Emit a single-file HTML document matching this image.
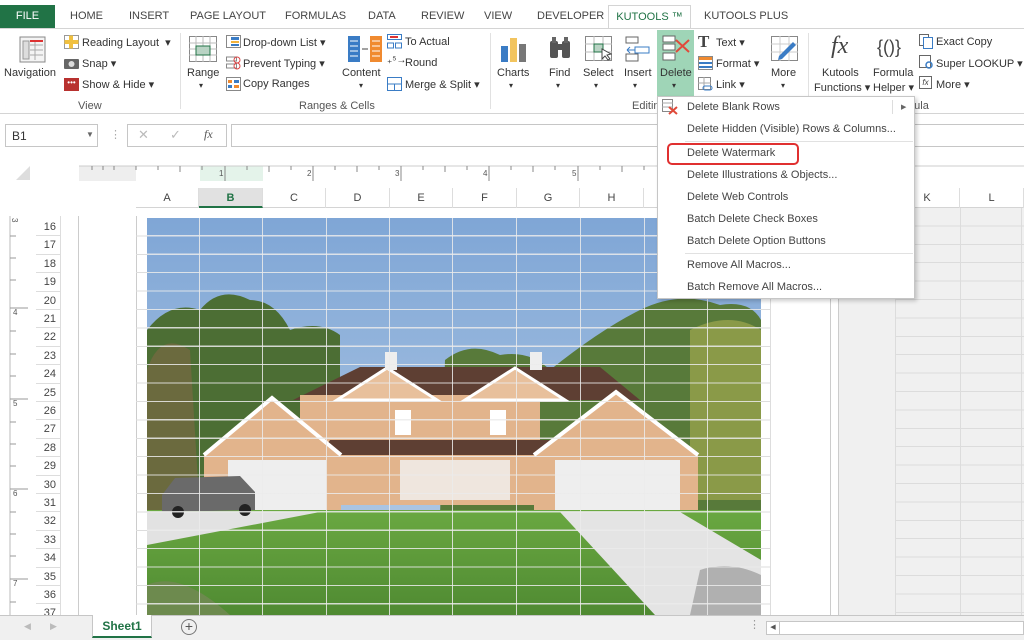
<!DOCTYPE html>
<html><head><meta charset="utf-8">
<style>
*{margin:0;padding:0;box-sizing:border-box}
body{width:1024px;height:640px;overflow:hidden;background:#fff;font-family:"Liberation Sans",sans-serif;color:#444;position:relative;font-size:11px}
.a{position:absolute;white-space:nowrap}
.tab{position:absolute;top:10px;font-size:11px;color:#444}
.sm{position:absolute;font-size:11px;color:#333}
.ic{position:absolute;width:14px;height:13px}
.lbl{position:absolute;font-size:11px;color:#333;text-align:center}
.gl{position:absolute;top:100px;font-size:11px;color:#555}
.rn{position:absolute;left:36px;width:24px;text-align:right;font-size:11px;color:#444;padding-right:4px;border-bottom:1px solid #ddd;height:18.4px;line-height:18px}
.ch{position:absolute;top:188px;height:20px;line-height:20px;text-align:center;font-size:11px;color:#444;border-right:1px solid #ddd}
.mi{position:absolute;left:687px;font-size:11px;color:#444}
</style></head><body>
<!-- tabs -->
<div class="a" style="left:0;top:5px;width:55px;height:23px;background:#217346;color:#fff;text-align:center;line-height:23px;font-size:11px">FILE</div>
<div class="tab" style="left:70px">HOME</div>
<div class="tab" style="left:129px">INSERT</div>
<div class="tab" style="left:190px">PAGE LAYOUT</div>
<div class="tab" style="left:285px">FORMULAS</div>
<div class="tab" style="left:368px">DATA</div>
<div class="tab" style="left:421px">REVIEW</div>
<div class="tab" style="left:484px">VIEW</div>
<div class="tab" style="left:537px">DEVELOPER</div>
<div class="a" style="left:608px;top:5px;width:83px;height:24px;border:1px solid #d4d4d4;border-bottom:none;background:#fff;color:#217346;text-align:center;line-height:23px;font-size:11px">KUTOOLS ™</div>
<div class="tab" style="left:704px">KUTOOLS PLUS</div>
<div class="a" style="left:0;top:28px;width:1024px;height:1px;background:#d4d4d4"></div>
<div class="a" style="left:691px;top:28px;width:333px;height:1px;background:#d4d4d4"></div>
<div class="a" style="left:0;top:113px;width:1024px;height:1px;background:#d4d4d4"></div>
<!-- separators -->
<div class="a" style="left:180px;top:33px;width:1px;height:76px;background:#e1e1e1"></div>
<div class="a" style="left:490px;top:33px;width:1px;height:76px;background:#e1e1e1"></div>
<div class="a" style="left:808px;top:33px;width:1px;height:76px;background:#e1e1e1"></div>
<!-- View group -->
<svg class="a" style="left:19px;top:36px" width="27" height="27"><rect x="1" y="1" width="25" height="25" fill="#f4f4f4" stroke="#888"/><rect x="4" y="5" width="6" height="18" fill="#ddd" stroke="#999"/><g stroke="#aaa"><line x1="11" y1="9" x2="24" y2="9"/><line x1="11" y1="14" x2="24" y2="14"/><line x1="11" y1="19" x2="24" y2="19"/><line x1="16" y1="4" x2="16" y2="24"/></g><line x1="11" y1="5" x2="24" y2="5" stroke="#d33" stroke-width="2"/></svg>
<div class="lbl" style="left:4px;top:67px">Navigation</div>
<svg class="a" style="left:64px;top:35px" width="15" height="14"><rect x="0.5" y="0.5" width="14" height="13" fill="#fff" stroke="#999"/><rect x="5" y="0.5" width="4" height="13" fill="#f0c040"/><rect x="0.5" y="5" width="14" height="4" fill="#f0c040"/></svg>
<div class="sm" style="left:82px;top:36px">Reading Layout &nbsp;▾</div>
<svg class="a" style="left:64px;top:57px" width="15" height="12"><rect x="0" y="2" width="15" height="10" rx="1" fill="#666"/><circle cx="7.5" cy="7" r="3" fill="#ddd"/></svg>
<div class="sm" style="left:82px;top:57px">Snap ▾</div>
<div class="a" style="left:64px;top:78px;width:15px;height:13px;background:#b8312f;color:#fff;font-size:8px;line-height:9px;text-align:center">•••</div>
<div class="sm" style="left:82px;top:78px">Show &amp; Hide ▾</div>
<div class="gl" style="left:78px">View</div>
<!-- Ranges & Cells -->
<svg class="a" style="left:189px;top:36px" width="28" height="26"><rect x="0.5" y="0.5" width="27" height="25" fill="#fff" stroke="#888"/><g stroke="#bbb"><line x1="7" y1="0" x2="7" y2="26"/><line x1="14" y1="0" x2="14" y2="26"/><line x1="21" y1="0" x2="21" y2="26"/><line x1="0" y1="7" x2="28" y2="7"/><line x1="0" y1="13" x2="28" y2="13"/><line x1="0" y1="19" x2="28" y2="19"/></g><rect x="7" y="10" width="14" height="9" fill="#b9d3c4" stroke="#217346"/></svg>
<div class="lbl" style="left:187px;top:67px">Range</div>
<div class="lbl" style="left:199px;top:81px;font-size:8px">▾</div>
<svg class="a" style="left:226px;top:35px" width="15" height="13"><rect x="0.5" y="0.5" width="14" height="12" fill="#fff" stroke="#888"/><rect x="5" y="2" width="8" height="3" fill="#3a7cc5"/><rect x="5" y="6" width="8" height="2" fill="#f2b33d"/><rect x="5" y="9" width="8" height="2" fill="#3a7cc5"/></svg>
<div class="sm" style="left:243px;top:36px">Drop-down List ▾</div>
<svg class="a" style="left:226px;top:56px" width="15" height="14"><rect x="0.5" y="1" width="10" height="4" fill="#fff" stroke="#888"/><rect x="0.5" y="8" width="10" height="4" fill="#fff" stroke="#888"/><circle cx="11" cy="4" r="3" fill="none" stroke="#d44"/><circle cx="11" cy="10" r="3" fill="none" stroke="#d44"/></svg>
<div class="sm" style="left:243px;top:57px">Prevent Typing ▾</div>
<svg class="a" style="left:226px;top:77px" width="15" height="14"><rect x="0.5" y="0.5" width="14" height="13" fill="#fff" stroke="#888"/><rect x="2" y="3" width="4" height="3" fill="#f08a30"/><rect x="2" y="8" width="4" height="3" fill="#3a7cc5"/><rect x="8" y="3" width="5" height="3" fill="#3a7cc5"/><rect x="8" y="8" width="5" height="3" fill="#f08a30"/></svg>
<div class="sm" style="left:243px;top:78px">Copy Ranges</div>
<svg class="a" style="left:348px;top:36px" width="34" height="26"><rect x="0" y="0" width="12" height="26" fill="#3a7cc5"/><rect x="22" y="0" width="12" height="26" fill="#f08a30"/><g stroke="#fff"><line x1="2" y1="5" x2="10" y2="5"/><line x1="2" y1="10" x2="10" y2="10"/><line x1="2" y1="15" x2="10" y2="15"/><line x1="2" y1="20" x2="10" y2="20"/><line x1="24" y1="5" x2="32" y2="5"/><line x1="24" y1="10" x2="32" y2="10"/><line x1="24" y1="15" x2="32" y2="15"/><line x1="24" y1="20" x2="32" y2="20"/></g><path d="M14 13h6" stroke="#444"/></svg>
<div class="lbl" style="left:342px;top:67px">Content</div>
<div class="lbl" style="left:359px;top:81px;font-size:8px">▾</div>
<svg class="a" style="left:387px;top:34px" width="15" height="15"><rect x="0.5" y="0.5" width="14" height="5" fill="#fff" stroke="#3a7cc5"/><rect x="3" y="2" width="8" height="2" fill="#d33"/><rect x="0.5" y="9" width="6" height="5" fill="#fff" stroke="#3a7cc5"/><rect x="8.5" y="9" width="6" height="5" fill="#fff" stroke="#3a7cc5"/></svg>
<div class="sm" style="left:405px;top:36px">To Actual</div>
<div class="sm" style="left:387px;top:55px;font-size:10px">₊⁵→</div>
<div class="sm" style="left:405px;top:57px">Round</div>
<svg class="a" style="left:387px;top:77px" width="15" height="14"><rect x="0.5" y="0.5" width="14" height="13" fill="#fff" stroke="#3a7cc5"/><line x1="0" y1="7" x2="15" y2="7" stroke="#3a7cc5"/><line x1="7.5" y1="7" x2="7.5" y2="14" stroke="#3a7cc5"/></svg>
<div class="sm" style="left:405px;top:78px">Merge &amp; Split ▾</div>
<div class="gl" style="left:299px">Ranges &amp; Cells</div>
<!-- Editing -->
<svg class="a" style="left:500px;top:36px" width="26" height="26"><rect x="1" y="10" width="7" height="16" fill="#3a7cc5"/><rect x="10" y="2" width="7" height="24" fill="#f2c45e"/><rect x="19" y="8" width="7" height="18" fill="#777"/></svg>
<div class="lbl" style="left:497px;top:67px">Charts</div>
<div class="lbl" style="left:509px;top:81px;font-size:8px">▾</div>
<svg class="a" style="left:548px;top:36px" width="24" height="24"><rect x="2" y="5" width="8" height="17" rx="2" fill="#555"/><rect x="14" y="5" width="8" height="17" rx="2" fill="#555"/><rect x="4" y="1" width="4" height="6" fill="#666"/><rect x="16" y="1" width="4" height="6" fill="#666"/><rect x="9" y="8" width="6" height="6" fill="#555"/></svg>
<div class="lbl" style="left:549px;top:67px">Find</div>
<div class="lbl" style="left:556px;top:81px;font-size:8px">▾</div>
<svg class="a" style="left:585px;top:36px" width="27" height="25"><rect x="0.5" y="0.5" width="26" height="24" fill="#fff" stroke="#888"/><g stroke="#bbb"><line x1="9" y1="0" x2="9" y2="25"/><line x1="18" y1="0" x2="18" y2="25"/><line x1="0" y1="8" x2="27" y2="8"/><line x1="0" y1="16" x2="27" y2="16"/></g><rect x="9" y="8" width="9" height="8" fill="#b9d3c4" stroke="#217346"/><path d="M17 13l0 10 3-3 3 4 2-1-3-4 4-1z" fill="#fff" stroke="#444"/></svg>
<div class="lbl" style="left:583px;top:67px">Select</div>
<div class="lbl" style="left:594px;top:81px;font-size:8px">▾</div>
<svg class="a" style="left:625px;top:36px" width="26" height="26"><rect x="1" y="1" width="12" height="6" fill="#fff" stroke="#666"/><rect x="10" y="11" width="14" height="6" fill="#fff" stroke="#3a7cc5"/><rect x="1" y="18" width="12" height="7" fill="#fff" stroke="#666"/><path d="M2 14h8M2 14l3-3M2 14l3 3" stroke="#3a7cc5" fill="none"/></svg>
<div class="lbl" style="left:624px;top:67px">Insert</div>
<div class="lbl" style="left:633px;top:81px;font-size:8px">▾</div>
<div class="a" style="left:657px;top:30px;width:37px;height:66px;background:#9fd5b7"></div>
<svg class="a" style="left:662px;top:35px" width="30" height="27"><rect x="1" y="1" width="12" height="6" fill="#fff" stroke="#666"/><rect x="1" y="9" width="12" height="6" fill="#fff" stroke="#666"/><rect x="1" y="18" width="12" height="7" fill="#fff" stroke="#666"/><path d="M14 5l13 12M27 5l-13 12" stroke="#e04a3a" stroke-width="2"/></svg>
<div class="lbl" style="left:660px;top:67px">Delete</div>
<div class="lbl" style="left:672px;top:81px;font-size:8px">▾</div>
<div class="sm" style="left:698px;top:32px;font-family:'Liberation Serif',serif;font-size:17px;font-weight:bold;color:#444">T</div>
<div class="sm" style="left:716px;top:36px">Text ▾</div>
<svg class="a" style="left:698px;top:56px" width="15" height="14"><rect x="0.5" y="0.5" width="14" height="13" fill="#fff" stroke="#888"/><rect x="1" y="1" width="13" height="3" fill="#f08a30"/><rect x="1" y="6" width="13" height="2" fill="#3a7cc5"/><rect x="1" y="10" width="13" height="2" fill="#3a7cc5"/></svg>
<div class="sm" style="left:716px;top:57px">Format ▾</div>
<svg class="a" style="left:698px;top:77px" width="15" height="14"><rect x="0.5" y="0.5" width="12" height="12" fill="#fff" stroke="#888"/><line x1="0" y1="6" x2="13" y2="6" stroke="#aaa"/><line x1="6" y1="0" x2="6" y2="13" stroke="#aaa"/><rect x="5" y="9" width="9" height="4" rx="2" fill="none" stroke="#3a7cc5"/></svg>
<div class="sm" style="left:716px;top:78px">Link ▾</div>
<svg class="a" style="left:771px;top:36px" width="27" height="25"><rect x="0.5" y="0.5" width="26" height="24" fill="#fff" stroke="#888"/><g stroke="#ccc"><line x1="9" y1="0" x2="9" y2="25"/><line x1="18" y1="0" x2="18" y2="25"/><line x1="0" y1="8" x2="27" y2="8"/><line x1="0" y1="16" x2="27" y2="16"/></g><path d="M8 20l14-14 3 3-14 14-4 1z" fill="#3a7cc5"/></svg>
<div class="lbl" style="left:771px;top:67px">More</div>
<div class="lbl" style="left:781px;top:81px;font-size:8px">▾</div>
<div class="gl" style="left:632px">Editin</div>
<!-- Formula group -->
<div class="sm" style="left:831px;top:33px;font-family:'Liberation Serif',serif;font-style:italic;font-size:24px;color:#444">fx</div>
<div class="lbl" style="left:822px;top:67px">Kutools</div>
<div class="lbl" style="left:814px;top:81px">Functions ▾</div>
<div class="sm" style="left:877px;top:37px;font-size:18px;color:#444">{()}</div>
<div class="lbl" style="left:873px;top:67px">Formula</div>
<div class="lbl" style="left:873px;top:81px">Helper ▾</div>
<svg class="a" style="left:919px;top:34px" width="14" height="15"><rect x="0.5" y="0.5" width="9" height="11" fill="#fff" stroke="#666"/><rect x="4.5" y="3.5" width="9" height="11" fill="#fff" stroke="#3a7cc5"/></svg>
<div class="sm" style="left:936px;top:36px">Exact Copy</div>
<svg class="a" style="left:919px;top:55px" width="15" height="15"><rect x="0.5" y="0.5" width="11" height="12" fill="#fff" stroke="#666"/><circle cx="10" cy="10" r="3" fill="none" stroke="#3a7cc5" stroke-width="1.5"/></svg>
<div class="sm" style="left:936px;top:57px">Super LOOKUP ▾</div>
<div class="a" style="left:919px;top:76px;width:13px;height:13px;border:1px solid #666;font-size:8px;font-style:italic;text-align:center;line-height:11px">fx</div>
<div class="sm" style="left:936px;top:78px">More ▾</div>
<div class="gl" style="left:905px">mula</div>
<!-- formula bar -->
<div class="a" style="left:5px;top:124px;width:93px;height:23px;border:1px solid #c6c6c6;background:#fff;font-size:12px;color:#333;padding:4px 6px">B1<span style="position:absolute;left:80px;top:5px;font-size:8px;color:#666">▼</span></div>
<div class="a" style="left:110px;top:128px;color:#aaa;font-size:11px">⋮</div>
<div class="a" style="left:127px;top:124px;width:100px;height:23px;border:1px solid #c6c6c6;background:#fff"></div>
<div class="a" style="left:138px;top:127px;color:#bbb;font-size:13px">✕</div>
<div class="a" style="left:170px;top:127px;color:#bbb;font-size:13px">✓</div>
<div class="a" style="left:204px;top:127px;color:#555;font-size:12px;font-family:'Liberation Serif',serif;font-style:italic">fx</div>
<div class="a" style="left:231px;top:124px;width:800px;height:23px;border:1px solid #c6c6c6;background:#fff"></div>
<!-- ruler -->
<svg class="a" style="left:0;top:158px" width="1024" height="26">
<path d="M30 8 L30 22 L16 22 Z" fill="#ddd"/>
<rect x="79" y="8" width="57" height="15" fill="#eee"/>
<rect x="200" y="8" width="63" height="15" fill="#e4f3ea"/>
<line x1="79" y1="8" x2="1024" y2="8" stroke="#ccc"/>
<g stroke="#888">
<line x1="92" y1="8" x2="92" y2="12"/><line x1="103" y1="8" x2="103" y2="12"/><line x1="114" y1="8" x2="114" y2="12"/><line x1="136" y1="8" x2="136" y2="12"/><line x1="158" y1="8" x2="158" y2="12"/><line x1="180" y1="8" x2="180" y2="14"/><line x1="202" y1="8" x2="202" y2="12"/><line x1="225" y1="8" x2="225" y2="23"/><line x1="247" y1="8" x2="247" y2="12"/><line x1="269" y1="8" x2="269" y2="14"/><line x1="291" y1="8" x2="291" y2="12"/><line x1="313" y1="8" x2="313" y2="23"/><line x1="335" y1="8" x2="335" y2="12"/><line x1="357" y1="8" x2="357" y2="14"/><line x1="379" y1="8" x2="379" y2="12"/><line x1="401" y1="8" x2="401" y2="23"/><line x1="423" y1="8" x2="423" y2="12"/><line x1="445" y1="8" x2="445" y2="14"/><line x1="467" y1="8" x2="467" y2="12"/><line x1="489" y1="8" x2="489" y2="23"/><line x1="511" y1="8" x2="511" y2="12"/><line x1="533" y1="8" x2="533" y2="14"/><line x1="555" y1="8" x2="555" y2="12"/><line x1="578" y1="8" x2="578" y2="23"/><line x1="600" y1="8" x2="600" y2="12"/><line x1="622" y1="8" x2="622" y2="14"/><line x1="644" y1="8" x2="644" y2="12"/>
</g>
<g font-size="8" fill="#555" font-family="Liberation Sans"><text x="219" y="18">1</text><text x="307" y="18">2</text><text x="395" y="18">3</text><text x="483" y="18">4</text><text x="572" y="18">5</text></g>
</svg>
<!-- column headers -->
<div class="a" style="left:136px;top:188px;width:888px;height:20px;border-bottom:1px solid #d4d4d4;background:#fff"></div>
<div class="ch" style="left:136px;width:63px">A</div>
<div class="ch" style="left:199px;width:64px;background:#e1e1e1;color:#217346;font-weight:bold;border-bottom:2px solid #217346">B</div>
<div class="ch" style="left:263px;width:63px">C</div>
<div class="ch" style="left:326px;width:64px">D</div>
<div class="ch" style="left:390px;width:63px">E</div>
<div class="ch" style="left:453px;width:64px">F</div>
<div class="ch" style="left:517px;width:63px">G</div>
<div class="ch" style="left:580px;width:64px">H</div>
<div class="ch" style="left:895px;width:65px">K</div>
<div class="ch" style="left:960px;width:64px">L</div>
<!-- left side -->
<svg class="a" style="left:8px;top:216px" width="22" height="400"><line x1="2" y1="0" x2="2" y2="400" stroke="#bbb"/><g stroke="#999"><line x1="2" y1="20" x2="8" y2="20"/><line x1="2" y1="42" x2="8" y2="42"/><line x1="2" y1="64" x2="8" y2="64"/><line x1="2" y1="92" x2="20" y2="92"/><line x1="2" y1="115" x2="8" y2="115"/><line x1="2" y1="138" x2="8" y2="138"/><line x1="2" y1="160" x2="8" y2="160"/><line x1="2" y1="183" x2="20" y2="183"/><line x1="2" y1="206" x2="8" y2="206"/><line x1="2" y1="228" x2="8" y2="228"/><line x1="2" y1="250" x2="8" y2="250"/><line x1="2" y1="273" x2="20" y2="273"/><line x1="2" y1="296" x2="8" y2="296"/><line x1="2" y1="318" x2="8" y2="318"/><line x1="2" y1="340" x2="8" y2="340"/><line x1="2" y1="363" x2="20" y2="363"/><line x1="2" y1="386" x2="8" y2="386"/></g><g font-size="8" fill="#555" font-family="Liberation Sans"><text x="4" y="8" transform="rotate(90 7 5)">3</text><text x="5" y="99">4</text><text x="5" y="190">5</text><text x="5" y="280">6</text><text x="5" y="370">7</text></g></svg>
<div class="a" style="left:60px;top:216px;width:1px;height:400px;background:#ddd"></div>
<div class="a" style="left:78px;top:216px;width:1px;height:400px;background:#ccc"></div>
<div class="a" style="left:136px;top:216px;width:1px;height:400px;background:#ccc"></div>
<div class="rn" style="top:218px">16</div><div class="rn" style="top:236.4px">17</div><div class="rn" style="top:254.8px">18</div><div class="rn" style="top:273.2px">19</div><div class="rn" style="top:291.6px">20</div><div class="rn" style="top:310px">21</div><div class="rn" style="top:328.4px">22</div><div class="rn" style="top:346.8px">23</div><div class="rn" style="top:365.2px">24</div><div class="rn" style="top:383.6px">25</div><div class="rn" style="top:402px">26</div><div class="rn" style="top:420.4px">27</div><div class="rn" style="top:438.8px">28</div><div class="rn" style="top:457.2px">29</div><div class="rn" style="top:475.6px">30</div><div class="rn" style="top:494px">31</div><div class="rn" style="top:512.4px">32</div><div class="rn" style="top:530.8px">33</div><div class="rn" style="top:549.2px">34</div><div class="rn" style="top:567.6px">35</div><div class="rn" style="top:586px">36</div><div class="rn" style="top:604.4px">37</div>
<!-- cell grid strips -->
<div class="a" style="left:136px;top:218px;width:635px;height:397px;background:repeating-linear-gradient(to bottom,transparent 0,transparent 17.4px,#ddd 17.4px,#ddd 18.4px)"></div>
<div class="a" style="left:770px;top:208px;width:1px;height:407px;background:#ddd"></div>
<div class="a" style="left:830px;top:208px;width:1px;height:407px;background:#ccc"></div>
<div class="a" style="left:838px;top:208px;width:186px;height:407px;background:#f0f0f0;border-left:1px solid #ccc"></div>
<div class="a" style="left:895px;top:208px;width:129px;height:407px;background:repeating-linear-gradient(to bottom,transparent 0,transparent 17.4px,#dcdcdc 17.4px,#dcdcdc 18.4px);border-left:1px solid #dcdcdc"></div>
<div class="a" style="left:960px;top:208px;width:1px;height:407px;background:#dcdcdc"></div>
<div class="a" style="left:1021px;top:208px;width:1px;height:407px;background:#dcdcdc"></div>
<!-- picture -->
<svg class="a" style="left:147px;top:218px" width="614" height="397" viewBox="147 218 614 397">
<defs><linearGradient id="sky" x1="0" y1="0" x2="0" y2="1"><stop offset="0" stop-color="#7fa6d6"/><stop offset="1" stop-color="#b9cfe6"/></linearGradient>
<linearGradient id="lawn" x1="0" y1="0" x2="0" y2="1"><stop offset="0" stop-color="#6aa841"/><stop offset="1" stop-color="#4f8a32"/></linearGradient></defs>
<rect x="147" y="218" width="614" height="397" fill="url(#sky)"/>
<path d="M147 330 Q170 300 200 310 Q220 285 250 300 Q275 300 290 330 Q320 320 340 335 L340 515 L147 515 Z" fill="#4c6e34"/>
<path d="M147 370 Q160 330 190 350 L200 515 L147 515Z" fill="#6b6a3e"/>
<path d="M445 360 Q470 340 500 355 Q530 350 550 370 Q600 330 640 310 Q680 290 720 305 Q750 300 761 320 L761 515 L440 515Z" fill="#587a3a"/>
<path d="M690 330 Q730 310 761 330 L761 500 L690 500Z" fill="#8a9a48"/>
<path d="M293 400 L360 367 L600 367 L640 400Z" fill="#5e3f33"/>
<rect x="300" y="395" width="240" height="110" fill="#e2b48c"/>
<path d="M337 400 L387 368 L437 400Z" fill="#e8c09c" stroke="#fff" stroke-width="3"/>
<path d="M465 400 L515 368 L565 400Z" fill="#e8c09c" stroke="#fff" stroke-width="3"/>
<rect x="385" y="352" width="12" height="18" fill="#eee"/><rect x="530" y="352" width="12" height="18" fill="#eee"/>
<rect x="395" y="410" width="16" height="25" fill="#fff"/><rect x="490" y="410" width="16" height="25" fill="#fff"/>
<path d="M330 440 L600 440 L610 455 L320 455Z" fill="#5e3f33"/>
<path d="M204 455 L272 398 L341 455 L341 515 L204 515Z" fill="#e2b48c"/>
<path d="M204 455 L272 398 L341 455" fill="none" stroke="#fff" stroke-width="4"/>
<path d="M534 455 L616 392 L698 455 L698 515 L534 515Z" fill="#e2b48c"/>
<path d="M534 455 L616 392 L698 455" fill="none" stroke="#fff" stroke-width="4"/>
<rect x="228" y="460" width="98" height="52" fill="#eee"/>
<rect x="555" y="460" width="125" height="52" fill="#eee"/>
<rect x="400" y="460" width="110" height="40" fill="#f2f2f2" opacity="0.8"/>
<rect x="147" y="510" width="614" height="105" fill="url(#lawn)"/>
<path d="M147 512 L320 512 L147 545Z" fill="#e2e2e2"/>
<path d="M560 512 L680 512 L761 560 L761 615 L655 615Z" fill="#e4e4e4"/>
<path d="M700 570 Q730 560 761 575 L761 615 L690 615Z" fill="#9a9a9a" opacity="0.7"/>
<path d="M162 495 L175 478 L240 476 L255 492 L255 510 L162 512Z" fill="#6a6a6a"/>
<circle cx="178" cy="512" r="6" fill="#222"/><circle cx="245" cy="510" r="6" fill="#222"/>
<path d="M147 585 Q180 570 230 615 L147 615Z" fill="#6d8a4e"/>
</svg>
<div class="a" style="left:147px;top:218px;width:614px;height:397px;background:repeating-linear-gradient(to bottom,transparent 0,transparent 17.2px,rgba(235,235,235,.85) 17.2px,rgba(235,235,235,.85) 18.4px)"></div>
<div class="a" style="left:199px;top:218px;width:1px;height:397px;background:rgba(235,235,235,.85)"></div>
<div class="a" style="left:262px;top:218px;width:1px;height:397px;background:rgba(235,235,235,.85)"></div>
<div class="a" style="left:326px;top:218px;width:1px;height:397px;background:rgba(235,235,235,.85)"></div>
<div class="a" style="left:389px;top:218px;width:1px;height:397px;background:rgba(235,235,235,.85)"></div>
<div class="a" style="left:452px;top:218px;width:1px;height:397px;background:rgba(235,235,235,.85)"></div>
<div class="a" style="left:516px;top:218px;width:1px;height:397px;background:rgba(235,235,235,.85)"></div>
<div class="a" style="left:580px;top:218px;width:1px;height:397px;background:rgba(235,235,235,.85)"></div>
<div class="a" style="left:644px;top:218px;width:1px;height:397px;background:rgba(235,235,235,.85)"></div>
<div class="a" style="left:707px;top:218px;width:1px;height:397px;background:rgba(235,235,235,.85)"></div>
<!-- menu -->
<div class="a" style="left:657px;top:96px;width:258px;height:203px;background:#fff;border:1px solid #c6c6c6;box-shadow:2px 2px 4px rgba(0,0,0,.2)"></div>
<svg class="a" style="left:662px;top:99px" width="16" height="16"><rect x="0.5" y="0.5" width="10" height="12" fill="#fff" stroke="#888"/><line x1="0" y1="4" x2="11" y2="4" stroke="#aaa"/><line x1="0" y1="8" x2="11" y2="8" stroke="#aaa"/><path d="M7 8l8 7M15 8l-8 7" stroke="#e04a3a" stroke-width="2"/></svg>
<div class="a" style="left:901px;top:103px;font-size:7px;color:#666">▶</div>
<div class="a" style="left:892px;top:100px;width:1px;height:14px;background:#ddd"></div>
<div class="mi" style="top:101px">Delete Blank Rows</div>
<div class="mi" style="top:123px">Delete Hidden (Visible) Rows &amp; Columns...</div>
<div class="a" style="left:685px;top:141px;width:228px;height:1px;background:#e1e1e1"></div>
<div class="a" style="left:667px;top:143px;width:132px;height:22px;border:2px solid #e03030;border-radius:5px"></div>
<div class="mi" style="top:147px">Delete Watermark</div>
<div class="mi" style="top:169px">Delete Illustrations &amp; Objects...</div>
<div class="mi" style="top:191px">Delete Web Controls</div>
<div class="mi" style="top:213px">Batch Delete Check Boxes</div>
<div class="mi" style="top:235px">Batch Delete Option Buttons</div>
<div class="a" style="left:685px;top:253px;width:228px;height:1px;background:#e1e1e1"></div>
<div class="mi" style="top:259px">Remove All Macros...</div>
<div class="mi" style="top:281px">Batch Remove All Macros...</div>
<!-- bottom -->
<div class="a" style="left:0;top:615px;width:1024px;height:25px;background:#f0f0f0;border-top:1px solid #c6c6c6"></div>
<div class="a" style="left:24px;top:621px;color:#bbb;font-size:9px">◀</div>
<div class="a" style="left:50px;top:621px;color:#bbb;font-size:9px">▶</div>
<div class="a" style="left:92px;top:615px;width:60px;height:23px;background:#fff;border-left:1px solid #c6c6c6;border-right:1px solid #c6c6c6;border-bottom:2px solid #217346;color:#217346;font-weight:bold;font-size:12px;text-align:center;line-height:22px">Sheet1</div>
<div class="a" style="left:181px;top:619px;width:16px;height:16px;border:1px solid #777;border-radius:50%;text-align:center;line-height:13px;font-size:14px;color:#555">+</div>
<div class="a" style="left:749px;top:618px;color:#999;font-size:11px">⋮</div>
<div class="a" style="left:766px;top:621px;width:258px;height:14px;background:#fff;border:1px solid #c6c6c6"></div>
<div class="a" style="left:766px;top:621px;width:14px;height:14px;border:1px solid #c6c6c6;font-size:7px;color:#555;text-align:center;line-height:12px">◀</div>
</body></html>
